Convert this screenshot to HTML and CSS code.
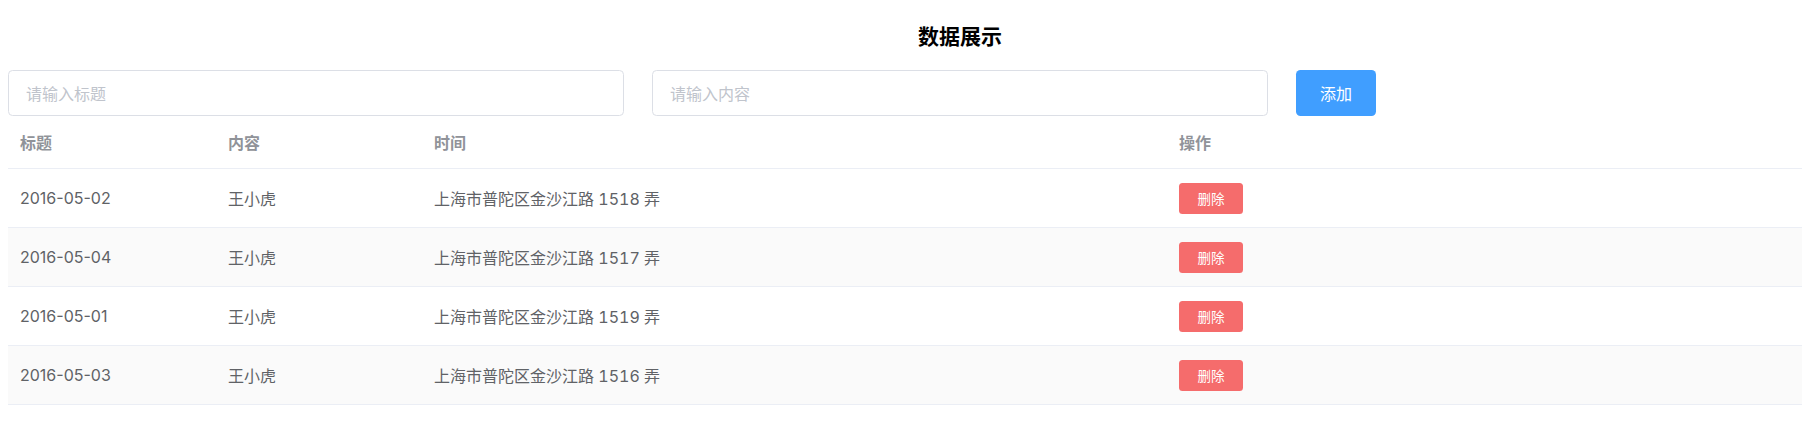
FILE: index.html
```html
<!DOCTYPE html>
<html lang="zh-CN">
<head>
<meta charset="utf-8">
<title>数据展示</title>
<link rel="stylesheet" href="styles.css">
</head>
<body>
<div class="page">
  <h3 class="title">数据展示</h3>
  <div class="form">
    <input class="input" type="text" placeholder="请输入标题">
    <input class="input" type="text" placeholder="请输入内容">
    <button class="btn-add" type="button">添加</button>
  </div>
  <div class="table">
    <div class="row head">
      <div class="cell">标题</div>
      <div class="cell">内容</div>
      <div class="cell">时间</div>
      <div class="cell">操作</div>
    </div>
    <div class="row body">
      <div class="cell">2016-05-02</div>
      <div class="cell">王小虎</div>
      <div class="cell addr">上海市普陀区金沙江路 1518 弄</div>
      <div class="cell"><button class="btn-del" type="button">删除</button></div>
    </div>
    <div class="row body striped">
      <div class="cell">2016-05-04</div>
      <div class="cell">王小虎</div>
      <div class="cell addr">上海市普陀区金沙江路 1517 弄</div>
      <div class="cell"><button class="btn-del" type="button">删除</button></div>
    </div>
    <div class="row body">
      <div class="cell">2016-05-01</div>
      <div class="cell">王小虎</div>
      <div class="cell addr">上海市普陀区金沙江路 1519 弄</div>
      <div class="cell"><button class="btn-del" type="button">删除</button></div>
    </div>
    <div class="row body striped">
      <div class="cell">2016-05-03</div>
      <div class="cell">王小虎</div>
      <div class="cell addr">上海市普陀区金沙江路 1516 弄</div>
      <div class="cell"><button class="btn-del" type="button">删除</button></div>
    </div>
  </div>
</div>
</body>
</html>
```

FILE: styles.css
```css
body {
  margin: 0 0 0 8px;
  background: #ffffff;
  font-family: "Noto Sans CJK SC", "Noto Sans", sans-serif;
}

.page {
  width: auto;
}

.title {
  margin: 0;
  padding-left: 110px;
  height: 70px;
  line-height: 70px;
  text-align: center;
  font-size: 21px;
  font-weight: 700;
  color: #000000;
}

.form {
  display: flex;
  gap: 28px;
  height: 46px;
}

.input {
  box-sizing: border-box;
  width: 616px;
  height: 46px;
  margin: 0;
  padding: 0 17px;
  border: 1px solid #dcdfe6;
  border-radius: 4.5px;
  background: #ffffff;
  font-family: inherit;
  font-size: 16px;
  color: #606266;
  outline: none;
}

.input::placeholder {
  color: #c0c4cc;
}

.btn-add {
  width: 80px;
  height: 46px;
  margin: 0;
  padding: 0;
  border: none;
  border-radius: 4.5px;
  background: #409eff;
  color: #ffffff;
  font-family: inherit;
  font-size: 16px;
}

.table {
  width: 100%;
}

.row {
  display: grid;
  grid-template-columns: 208px 206px 745px 1fr;
  align-items: center;
  border-bottom: 1px solid #ebeef5;
  font-size: 16px;
  font-family: "Inter", "Noto Sans CJK SC", sans-serif;
}

.head {
  height: 52px;
  color: #909399;
  font-weight: 700;
}

.body {
  height: 58px;
  color: #606266;
}

.striped {
  background: #fafafa;
}

.cell {
  padding: 0 12px;
  white-space: nowrap;
}

.addr {
  font-variant-numeric: tabular-nums;
}

.btn-del {
  display: block;
  width: 64px;
  height: 31px;
  margin: 0;
  padding: 0;
  border: none;
  border-radius: 3.5px;
  background: #f56c6c;
  color: #ffffff;
  font-family: "Noto Sans CJK SC", sans-serif;
  font-size: 13.5px;
}
```
